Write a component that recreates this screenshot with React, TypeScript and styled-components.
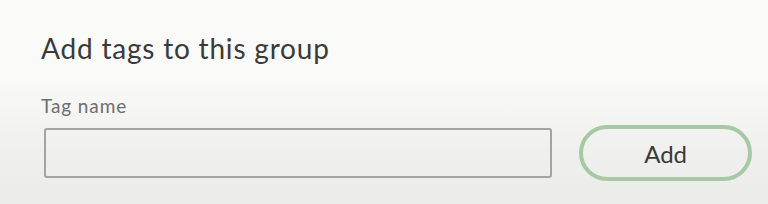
import React from "react";
import styled, { createGlobalStyle } from "styled-components";

const GlobalStyle = createGlobalStyle`
  html, body {
    margin: 0;
    padding: 0;
  }
  body {
    background: #f1f1f0;
  }
`;

function App() {
  return (
    <>
      <GlobalStyle />
      <Page>
        <Heading>Add tags to this group</Heading>
        <Label htmlFor="tag-name">Tag name</Label>
        <Row>
          <TagInput id="tag-name" type="text" />
          <AddButton>Add</AddButton>
        </Row>
      </Page>
    </>
  );
}

const Page = styled.div`
  width: 768px;
  height: 204px;
  box-sizing: border-box;
  padding: 31px 16px 0 41px;
  background: linear-gradient(180deg, #fbfbfa 0%, #f9f9f8 40%, #efefee 75%, #ebebea 100%);
  font-family: Lato, "Noto Sans", sans-serif;
  display: flex;
  flex-direction: column;
`;

const Heading = styled.h2`
  margin: 0;
  font-size: 28px;
  font-weight: 400;
  line-height: 34px;
  letter-spacing: 0.8px;
  color: #3a3a3a;
`;

const Label = styled.label`
  margin-top: 30px;
  font-size: 19px;
  line-height: 22px;
  letter-spacing: 0.9px;
  color: #6e6e6e;
`;

const Row = styled.div`
  display: flex;
  align-items: center;
  gap: 27px;
  margin-top: 8px;
`;

const TagInput = styled.input`
  box-sizing: border-box;
  width: 509px;
  height: 50px;
  margin-left: 3px;
  border: 2px solid #a3a3a3;
  border-radius: 3px;
  background: transparent;
  outline: none;
`;

const AddButton = styled.button`
  box-sizing: border-box;
  width: 173px;
  height: 56px;
  border: 4px solid #a6c9a3;
  border-radius: 28px;
  background: transparent;
  font-family: Lato, "Noto Sans", sans-serif;
  font-size: 24px;
  color: #3a3a3a;
  cursor: pointer;
`;

export default App;
